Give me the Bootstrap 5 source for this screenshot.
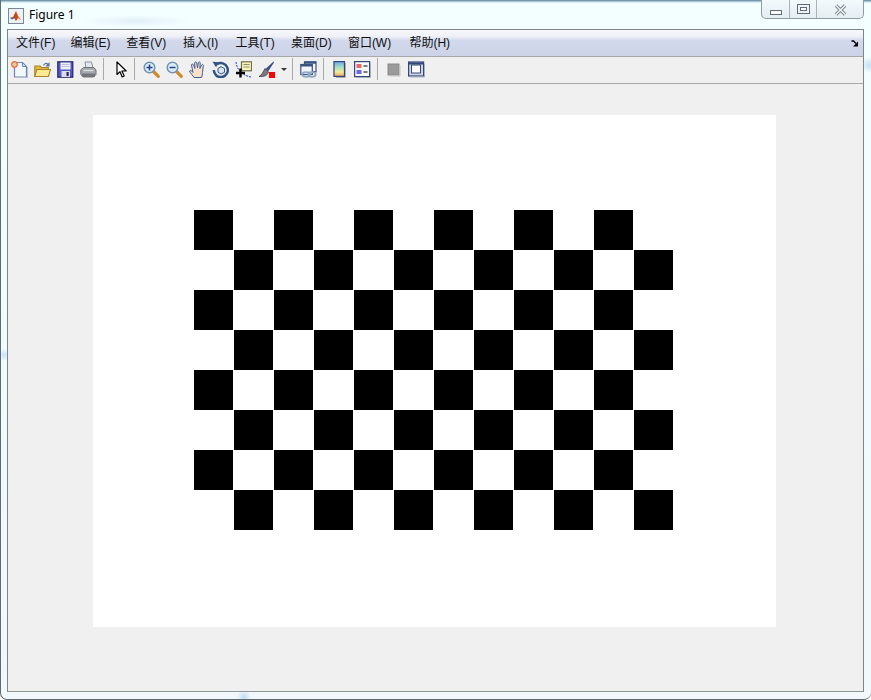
<!DOCTYPE html>
<html lang="zh">
<head>
<meta charset="utf-8">
<title>Figure 1</title>
<link href="https://cdn.jsdelivr.net/npm/bootstrap@5.3.0/dist/css/bootstrap.min.css" rel="stylesheet">
<style>
html,body{height:100%;margin:0;overflow:hidden;background:#fff}
.winframe{height:700px;width:871px;background:radial-gradient(circle at 243px 697px,#bcdcf8 0,transparent 7px),radial-gradient(circle at 3px 355px,#c4e0f6 0,transparent 6px),radial-gradient(circle at 868px 65px,#c4e0f6 0,transparent 8px),radial-gradient(ellipse 55px 6px at 135px 21px,#e2eff7 0,transparent 100%),linear-gradient(#f3feff,#effbfe 60%,#f2f8fb);border:1px solid #5f6b70;border-top:0;border-right:0;border-radius:0 0 7px 7px;position:relative;overflow:hidden}
.topglow{height:3px;background:linear-gradient(#5d7c93,#bcd6e6 60%,#f3feff)}
.titlerow{height:26px;padding-left:7px}
.apptitle{font:12px/1 "Noto Sans",sans-serif;color:#000;margin-left:5px;margin-top:-2px}
.winbtns{height:19px;width:103px;margin-right:7px;margin-top:-3px;border:1px solid #8f9ca3;border-top:0;border-radius:0 0 5px 5px;background:linear-gradient(#f2fafc,#e4edf1)}
.wb1{width:28px;border-right:1px solid #a9b4b9;padding-top:6px}
.wb2{width:27px;border-right:1px solid #a9b4b9}
.wb3{flex:1;padding-top:2px}
.appbody{flex:1;margin:0 7px 7px 6px;border:1px solid #7f8688;border-bottom-color:#8f9698;background:#f0f0f0;min-height:0}
.menustrip{height:27px;background:linear-gradient(#f8f9fb,#eef0f7 25%,#d3d9ec 40%,#ccd3e8);border-bottom:1px solid #a6a8aa}
.menuitem{font:12px/1 "Liberation Sans","Noto Sans CJK SC",sans-serif;color:#101010;padding:0 8.1px;margin-top:-1px}
.menuitem:nth-child(1){margin-right:-1px}
.menuitem:nth-child(2){margin-right:-.5px}
.menuitem:nth-child(3){margin-right:.5px}
.menuitem:nth-child(4){margin-right:1px}
.menuitem:nth-child(7){margin-right:2px}
.toolstrip{height:27px;background:#f0f0f0;border-bottom:1px solid #a6a8aa;padding-bottom:2px}
.tbslot{width:23px;height:24px}
.tbslot svg{width:17px;height:17px;display:block}
.tbsep{width:1px;height:22px;background:#a9a9a9;flex:none}
.sepa{margin:0 5.5px 0 3px}
.sepb{margin:0 4.5px 0 1.5px}
.sepc{margin:0 3.5px 0 0}
.sepd{margin:0 4px 0 3.5px}
.sepe{margin:0 4px 0 3px}
.dropcaret{width:0;height:0;border:3px solid transparent;border-top:3px solid #333;border-bottom:0;margin:0 5.5px 0 3px}
.canvasarea{flex:1;background:#f0f0f0;padding:31px 0 0 85px}
.plotarea{width:683px;height:512px;background:#fff;padding:95px 0 0 101px}
.chkrow{height:40px}
.chkrow.shifted{padding-left:40px}
.chksq{width:39px;height:40px;background:#000;margin-right:41px;flex:none}
</style>
</head>
<body>
<div class="winframe d-flex flex-column">
  <div class="topglow"></div>
  <div class="titlerow d-flex align-items-center">
    <svg width="16" height="16" viewBox="0 0 16 16"><rect x=".5" y=".5" width="15" height="15" fill="#eef1f5" stroke="#7d8794"/><path d="M2 10l3-1 3-6 2 5 3 4-3-2-2 3-2-3z" fill="#c8451c"/><path d="M8 3l2 5 3 4-3-2z" fill="#e8861f"/><path d="M2 10l3-1 1 1.500-2 1z" fill="#3f6fb0"/></svg>
    <span class="apptitle">Figure 1</span>
    <div class="winbtns d-flex ms-auto align-self-start">
      <div class="wb1 d-flex align-items-center justify-content-center"><svg width="14" height="7" viewBox="0 0 14 7"><rect x="1.500" y="1.500" width="11" height="4" fill="#fff" stroke="#5f6b75"/></svg></div>
      <div class="wb2 d-flex align-items-center justify-content-center"><svg width="13" height="11" viewBox="0 0 13 11"><rect x=".5" y=".5" width="12" height="9" fill="#eef4f7" stroke="#5f6b75"/><rect x="3.500" y="3.500" width="6" height="3" fill="#fff" stroke="#5f6b75"/></svg></div>
      <div class="wb3 d-flex align-items-center justify-content-center"><svg width="13" height="12" viewBox="0 0 13 12"><path d="M2 1.500L11 10.500M11 1.500L2 10.500" stroke="#7e8a90" stroke-width="3.400"/><path d="M2 1.500L11 10.500M11 1.500L2 10.500" stroke="#f3f6f7" stroke-width="1.400"/></svg></div>
    </div>
  </div>
  <div class="appbody d-flex flex-column">
    <div class="menustrip d-flex align-items-center">
      <span class="menuitem">文件(F)</span>
      <span class="menuitem">编辑(E)</span>
      <span class="menuitem">查看(V)</span>
      <span class="menuitem">插入(I)</span>
      <span class="menuitem">工具(T)</span>
      <span class="menuitem">桌面(D)</span>
      <span class="menuitem">窗口(W)</span>
      <span class="menuitem">帮助(H)</span>
      <svg class="ms-auto me-1" width="8" height="7" viewBox="0 0 8 7"><path d="M.5 1h2L5 3.500" fill="none" stroke="#000" stroke-width="1.300"/><path d="M7 1.500V6.500H2z" fill="#000"/></svg>
    </div>
    <div class="toolstrip d-flex align-items-center">
      <div class="tbslot d-flex align-items-center justify-content-center"><svg viewBox="0 0 17 17"><path d="M3.500 1.500h8l4 4v10.500h-12z" fill="#f2f7fe" stroke="#6f86b3" stroke-width="1.200"/><path d="M11.500 1.500v4h4z" fill="#cfdcf2" stroke="#6f86b3"/><path d="M16.500 6v11H5" fill="none" stroke="#b9c0cc"/><circle cx="3.500" cy="3.500" r="2.800" fill="#f8c89c" stroke="#e2683a" stroke-width="1.200"/></svg></div>
      <div class="tbslot d-flex align-items-center justify-content-center"><svg viewBox="0 0 17 17"><path d="M.8 15.500v-10.500h5.500l1 1.500h7v9z" fill="#e5b93f" stroke="#a58327" stroke-width="1.100"/><path d="M.8 15.500l2-7h13.700l-2 7z" fill="#fde992" stroke="#a58327" stroke-width="1.100"/><path d="M9.500 4.500c1-2.500 3-2.500 4.500-1" fill="none" stroke="#56739c" stroke-width="1.200"/><path d="M15.500 1v4.500h-4z" fill="#56739c"/></svg></div>
      <div class="tbslot d-flex align-items-center justify-content-center"><svg viewBox="0 0 17 17"><rect x=".8" y=".8" width="15" height="15.400" fill="#5558c0" stroke="#23246a" stroke-width="1.200"/><rect x="3.500" y="1.500" width="10" height="7" fill="#eeeef8"/><path d="M4.500 3.500h8M4.500 5.500h8" stroke="#c0c0dc"/><rect x="4.500" y="10" width="8.500" height="6" fill="#dcdce8"/><rect x="9.500" y="11" width="2.200" height="4" fill="#23246a"/></svg></div>
      <div class="tbslot d-flex align-items-center justify-content-center"><svg viewBox="0 0 17 17"><path d="M5 1h6.500l1.500 6H6z" fill="#e4e9f0" stroke="#8a9098"/><path d="M.8 9l2.500-2.500h10.500L16 9v4.500l-2.500 2.500h-10L.8 13.500z" fill="#a6aaae" stroke="#6e7276"/><path d="M2 12.500h13V16H2z" fill="#73777b"/><path d="M3.500 9.500h10" stroke="#dfe2e5" stroke-width="1.200"/></svg></div>
      <div class="tbsep sepa"></div>
      <div class="tbslot d-flex align-items-center justify-content-center"><svg viewBox="0 0 17 17"><path d="M4 1v12.500l3-2.800 2.200 5.300 2-1-2.300-5h4.300z" fill="#fff" stroke="#000" stroke-width="1.200" stroke-linejoin="round"/></svg></div>
      <div class="tbsep sepb"></div>
      <div class="tbslot d-flex align-items-center justify-content-center"><svg viewBox="0 0 17 17"><path d="M10.500 10.500l4.800 4.800" stroke="#d08a2e" stroke-width="3.200" stroke-linecap="round"/><circle cx="6.500" cy="6.500" r="5.300" fill="#dcebf8" stroke="#6f93b5" stroke-width="1.500"/><path d="M3.500 6.500h6M6.500 3.500v6" stroke="#27408b" stroke-width="1.500"/></svg></div>
      <div class="tbslot d-flex align-items-center justify-content-center"><svg viewBox="0 0 17 17"><path d="M10.500 10.500l4.800 4.800" stroke="#d08a2e" stroke-width="3.200" stroke-linecap="round"/><circle cx="6.500" cy="6.500" r="5.300" fill="#dcebf8" stroke="#6f93b5" stroke-width="1.500"/><path d="M3.500 6.500h6" stroke="#27408b" stroke-width="1.500"/></svg></div>
      <div class="tbslot d-flex align-items-center justify-content-center"><svg viewBox="0 0 17 17"><path d="M5 16.500c-1-2-4-4.500-4.500-6.500 1-1 2.500-.2 3.500 1.500L2.500 4c0-1.200 1.700-1.200 2.100 0l1.300 3.500L5.700 1.800c0-1.100 1.800-1.100 2 0l.8 5.200.9-5.500c.3-1 1.800-.8 1.800.3l-.3 5.700 1.700-3.500c.5-1 1.900-.5 1.700.5L13.500 11.500c0 2-.5 3.500-1 5z" fill="#fbe1cb" stroke="#3e5f96" stroke-width="1" stroke-linejoin="round"/></svg></div>
      <div class="tbslot d-flex align-items-center justify-content-center"><svg viewBox="0 0 17 17"><path d="M5 3.200A7 7 0 1 1 1.800 9" fill="none" stroke="#2f5488" stroke-width="2.500"/><path d="M.5 .8l6.500.5-3 5z" fill="#2f5488"/><path d="M6 7.500l3-1.800 3.500 1.800v3.800L9 13l-3-1.700z" fill="#dbe6f2" stroke="#2f5488"/></svg></div>
      <div class="tbslot d-flex align-items-center justify-content-center"><svg viewBox="0 0 17 17"><path d="M1 1c.5 6 4.500 13 15 15" fill="none" stroke="#2c34c8" stroke-dasharray="2 1"/><rect x="6.500" y=".8" width="10" height="9" fill="#f7f2bd" stroke="#6f6f4a" stroke-width="1.200"/><path d="M8.500 3.500h6M8.500 6h6" stroke="#8e8e68"/><path d="M5.500 7.500v9M1 12h9" stroke="#000" stroke-width="2.400"/></svg></div>
      <div class="tbslot d-flex align-items-center justify-content-center"><svg viewBox="0 0 17 17"><path d="M15.500 .5L7.500 8l2.500 2.500 6-9z" fill="#3a4f8a"/><path d="M7 7.500l3.500 3.500c-1 3.500-4.500 5-9.500 4.500 3-1.500 4-4.500 6-8z" fill="#7c7c7c" stroke="#3f3f3f" stroke-width=".8"/><rect x="11" y="11" width="6" height="6" fill="#f00"/></svg></div>
      <div class="dropcaret"></div>
      <div class="tbsep sepc"></div>
      <div class="tbslot d-flex align-items-center justify-content-center"><svg viewBox="0 0 17 17"><rect x="4.500" y=".8" width="11.500" height="10" fill="#f1f4f8" stroke="#37537f" stroke-width="1.200"/><rect x=".8" y="3.500" width="11.500" height="10" fill="#f1f4f8" stroke="#37537f" stroke-width="1.200"/><path d="M4.500 .8h11.500v2h-11.500zM.8 3.500h11.500v2h-11.500z" fill="#37537f"/><ellipse cx="6" cy="13.500" rx="3.800" ry="2.300" fill="none" stroke="#8fa6c4" stroke-width="1.800"/><ellipse cx="11.800" cy="13.500" rx="3.800" ry="2.300" fill="none" stroke="#8fa6c4" stroke-width="1.800"/></svg></div>
      <div class="tbsep sepd"></div>
      <div class="tbslot d-flex align-items-center justify-content-center"><svg viewBox="0 0 17 17"><defs><linearGradient id="rb" x1="0" y1="0" x2="0" y2="1"><stop offset="0" stop-color="#6fa8e8"/><stop offset=".4" stop-color="#a8e0c0"/><stop offset=".7" stop-color="#f4eb9a"/><stop offset="1" stop-color="#f0a060"/></linearGradient></defs><rect x="3" y=".6" width="10.500" height="14.800" fill="url(#rb)" stroke="#33457a" stroke-width="1.200"/><path d="M14.500 2v14.500H5" fill="none" stroke="#aab0b8"/></svg></div>
      <div class="tbslot d-flex align-items-center justify-content-center"><svg viewBox="0 0 17 17"><rect x=".6" y=".6" width="15" height="15" fill="#f6f8fb" stroke="#33457a" stroke-width="1.200"/><rect x="2.500" y="3" width="5" height="4" fill="#e56a6a"/><rect x="2.500" y="9" width="5" height="4" fill="#6a6ae0"/><path d="M9.500 5h4M9.500 11h4" stroke="#000"/><path d="M16.500 2v14.500H2" fill="none" stroke="#aab0b8"/></svg></div>
      <div class="tbsep sepe"></div>
      <div class="tbslot d-flex align-items-center justify-content-center"><svg viewBox="0 0 17 17"><rect x="3" y="3" width="11" height="11" fill="#9a9a9a" stroke="#8a8a8a"/><path d="M15 4.500v10.500H4.500" fill="none" stroke="#c4c4c4"/></svg></div>
      <div class="tbslot d-flex align-items-center justify-content-center"><svg viewBox="0 0 17 17"><rect x=".6" y="1" width="15" height="14" fill="#cfd6e2" stroke="#33457a" stroke-width="1.200"/><rect x="1" y="1.500" width="14" height="2" fill="#33457a"/><rect x="3.500" y="4" width="9" height="8" fill="#fff" stroke="#33457a"/><path d="M16.500 3v13H2" fill="none" stroke="#aab0b8"/></svg></div>
    </div>
    <div class="canvasarea">
      <div class="plotarea">
        <div class="chkrow d-flex"><div class="chksq"></div><div class="chksq"></div><div class="chksq"></div><div class="chksq"></div><div class="chksq"></div><div class="chksq"></div></div>
        <div class="chkrow shifted d-flex"><div class="chksq"></div><div class="chksq"></div><div class="chksq"></div><div class="chksq"></div><div class="chksq"></div><div class="chksq"></div></div>
        <div class="chkrow d-flex"><div class="chksq"></div><div class="chksq"></div><div class="chksq"></div><div class="chksq"></div><div class="chksq"></div><div class="chksq"></div></div>
        <div class="chkrow shifted d-flex"><div class="chksq"></div><div class="chksq"></div><div class="chksq"></div><div class="chksq"></div><div class="chksq"></div><div class="chksq"></div></div>
        <div class="chkrow d-flex"><div class="chksq"></div><div class="chksq"></div><div class="chksq"></div><div class="chksq"></div><div class="chksq"></div><div class="chksq"></div></div>
        <div class="chkrow shifted d-flex"><div class="chksq"></div><div class="chksq"></div><div class="chksq"></div><div class="chksq"></div><div class="chksq"></div><div class="chksq"></div></div>
        <div class="chkrow d-flex"><div class="chksq"></div><div class="chksq"></div><div class="chksq"></div><div class="chksq"></div><div class="chksq"></div><div class="chksq"></div></div>
        <div class="chkrow shifted d-flex"><div class="chksq"></div><div class="chksq"></div><div class="chksq"></div><div class="chksq"></div><div class="chksq"></div><div class="chksq"></div></div>
      </div>
    </div>
  </div>
</div>
<script src="https://cdn.jsdelivr.net/npm/bootstrap@5.3.0/dist/js/bootstrap.bundle.min.js"></script>
</body>
</html>
